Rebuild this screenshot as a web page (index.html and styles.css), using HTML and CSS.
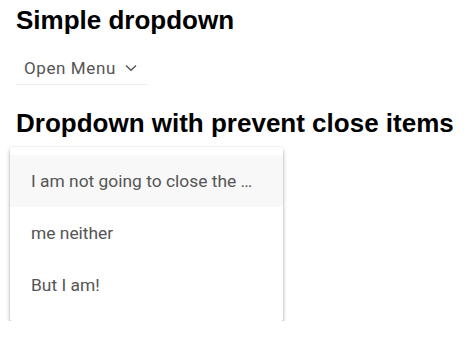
FILE: index.html
```html
<!DOCTYPE html>
<html>
<head>
<meta charset="utf-8">
<link rel="stylesheet" href="styles.css">
</head>
<body>
<h2 class="title">Simple dropdown</h2>
<button class="btn"><span>Open Menu</span><svg class="chev" width="12" height="8" viewBox="0 0 12 8"><path d="M1 1.5 L6 6.2 L11 1.5" fill="none" stroke="#555" stroke-width="1.4"/></svg></button>
<h2 class="title second">Dropdown with prevent close items</h2>
<div class="menu">
  <div class="item active">I am not going to close the …</div>
  <div class="item">me neither</div>
  <div class="item">But I am!</div>
</div>
</body>
</html>
```
FILE: styles.css
```css
html, body { margin: 0; padding: 0; background: #fff; }
body { padding: 0 16px; font-family: "Liberation Sans", Arial, sans-serif; }
.title { margin: 0; font-size: 26px; font-weight: bold; color: #000; line-height: 32px; padding-top: 4px; }
.second { margin-top: 22px; padding-top: 0; }
.btn {
  margin-top: 16px;
  display: flex; align-items: center; gap: 9px;
  border: none; border-bottom: 1px solid #eeeeee;
  background: #fff; white-space: nowrap; box-sizing: border-box;
  font-family: Roboto, sans-serif; font-size: 17px; letter-spacing: 0.6px;
  color: #555; padding: 0 8px; width: 131px; height: 33px;
}
.chev { display: block; flex: none; }
.menu {
  margin: 8px 0 0 -6px; width: 273px;
  padding: 8px 0 10px;
  background: #fff;
  box-shadow: 0 3px 4px rgba(0,0,0,0.3), 0 0 2px rgba(0,0,0,0.14);
  border-radius: 2px;
}
.item {
  height: 52px; display: flex; align-items: center;
  padding: 0 21px; font-family: Roboto, sans-serif; font-size: 17.4px; color: #555;
}
.active { background: #f8f8f8; }
```
